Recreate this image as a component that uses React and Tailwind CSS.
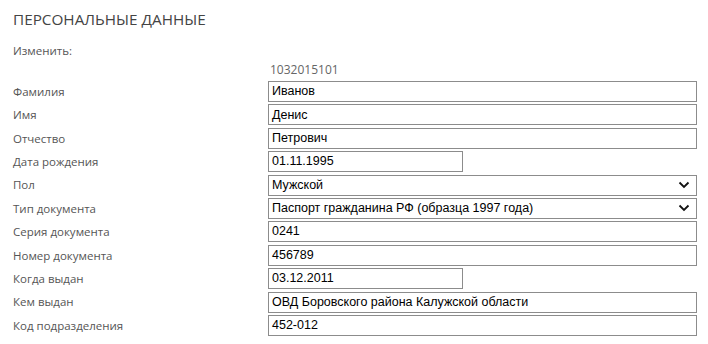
import React from "react";

const rows = [
  { label: "Фамилия", value: "Иванов", w: "full" },
  { label: "Имя", value: "Денис", w: "full" },
  { label: "Отчество", value: "Петрович", w: "full" },
  { label: "Дата рождения", value: "01.11.1995", w: "short" },
  { label: "Пол", value: "Мужской", w: "full", select: true },
  { label: "Тип документа", value: "Паспорт гражданина РФ (образца 1997 года)", w: "full", select: true },
  { label: "Серия документа", value: "0241", w: "full" },
  { label: "Номер документа", value: "456789", w: "full" },
  { label: "Когда выдан", value: "03.12.2011", w: "short" },
  { label: "Кем выдан", value: "ОВД Боровского района Калужской области", w: "full" },
  { label: "Код подразделения", value: "452-012", w: "full" },
];

function Chevron() {
  return (
    <svg width="12" height="8" viewBox="0 0 12 8" className="shrink-0">
      <polyline points="1.5,1.5 6,6 10.5,1.5" fill="none" stroke="#111" strokeWidth="1.8" />
    </svg>
  );
}

export default function App() {
  return (
    <div className="w-[708px] h-[344px] bg-white overflow-hidden relative">
      <div className="pl-[13px] pt-[9px]">
        <div className="text-[15.3px] leading-[20px] text-[#444]" style={{ fontFamily: '"Open Sans", "Noto Sans", sans-serif' }}>
          ПЕРСОНАЛЬНЫЕ ДАННЫЕ
        </div>
        <div className="mt-[14px] text-[11.5px] leading-[16px] text-[#555]" style={{ fontFamily: '"Open Sans", "Noto Sans", sans-serif' }}>
          Изменить:
        </div>
        <div className="mt-[3px] ml-[257px] text-[12px] leading-[16px] text-[#666]" style={{ fontFamily: '"Open Sans", "Noto Sans", sans-serif' }}>
          1032015101
        </div>
        <div className="mt-[3px] flex flex-col gap-[2.4px]">
          {rows.map((r) => (
            <div key={r.label} className="flex items-center h-[21px]">
              <div className="w-[255px] shrink-0 text-[11.5px] text-[#555]" style={{ fontFamily: '"Open Sans", "Noto Sans", sans-serif' }}>
                {r.label}
              </div>
              <div
                className={`h-[21px] border border-[#8c8c8c] flex items-center justify-between pl-[3px] pr-[6px] text-[12.5px] text-black ${r.w === "short" ? "w-[195px]" : "w-[429px]"}`}
                style={{ fontFamily: '"Liberation Sans", Arial, sans-serif' }}
              >
                <span>{r.value}</span>
                {r.select && <Chevron />}
              </div>
            </div>
          ))}
        </div>
      </div>
    </div>
  );
}
